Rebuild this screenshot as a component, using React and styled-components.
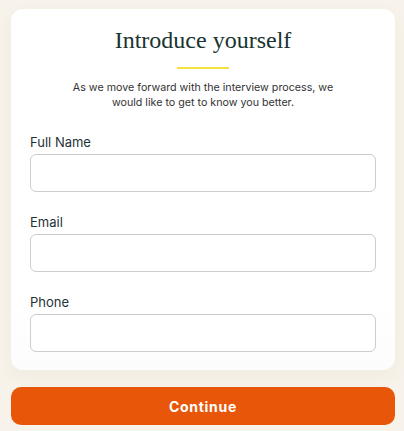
import styled, { createGlobalStyle } from 'styled-components'

const GlobalStyle = createGlobalStyle`
  html, body {
    margin: 0;
    padding: 0;
    background: #f7f3ea;
  }

  body {
    font-family: Inter, 'Noto Sans', sans-serif;
  }
`

const Page = styled.div`
  padding: 9px 9px 6px 11px;
  display: flex;
  flex-direction: column;
  gap: 17px;
`

const Card = styled.form`
  background: linear-gradient(180deg, #ffffff 80%, #fcfcfc 100%);
  border-radius: 12px;
  padding: 16px 19px 18px;
  display: flex;
  flex-direction: column;
  box-shadow: 0 6px 18px rgba(120, 100, 60, 0.05);
`

const Title = styled.h1`
  margin: 0;
  font-family: 'Liberation Serif', 'Times New Roman', serif;
  font-weight: 400;
  font-size: 24px;
  line-height: 30px;
  color: #1a3330;
  text-align: center;
`

const Accent = styled.div`
  width: 52px;
  height: 2px;
  background: #f6e23f;
  margin: 12px auto 0;
`

const Intro = styled.p`
  margin: 11px 0 0;
  font-size: 10.7px;
  line-height: 15px;
  color: #333;
  text-align: center;
`

const Fields = styled.div`
  margin-top: 24px;
  display: flex;
  flex-direction: column;
  gap: 22px;
`

const Field = styled.label`
  display: flex;
  flex-direction: column;
  gap: 4px;
`

const Label = styled.span`
  font-size: 13px;
  line-height: 16px;
  color: #1f3338;
`

const Input = styled.input`
  box-sizing: border-box;
  height: 38px;
  width: 100%;
  border: 1px solid #cdcdcd;
  border-radius: 6px;
  background: #fff;
  padding: 0 12px;
  font: inherit;
  font-size: 13px;
  outline: none;
`

const Button = styled.button`
  height: 38px;
  border: none;
  border-radius: 10px;
  background: #e85709;
  color: #fff;
  font-family: Inter, 'Noto Sans', sans-serif;
  font-weight: 700;
  font-size: 14px;
  letter-spacing: 0.7px;
  cursor: pointer;
`

const fields = [
  { name: 'fullName', label: 'Full Name', type: 'text' },
  { name: 'email', label: 'Email', type: 'email' },
  { name: 'phone', label: 'Phone', type: 'tel' },
]

const App = () => (
  <>
    <GlobalStyle />
    <Page>
      <Card onSubmit={(e) => e.preventDefault()}>
        <Title>Introduce yourself</Title>
        <Accent />
        <Intro>
          As we move forward with the interview process, we
          <br />
          would like to get to know you better.
        </Intro>
        <Fields>
          {fields.map((field) => (
            <Field key={field.name}>
              <Label>{field.label}</Label>
              <Input name={field.name} type={field.type} />
            </Field>
          ))}
        </Fields>
      </Card>
      <Button type="button">Continue</Button>
    </Page>
  </>
)

export default App
